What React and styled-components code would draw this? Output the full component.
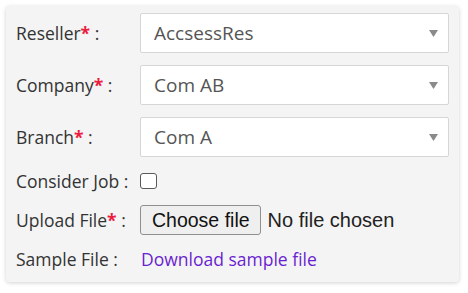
import styled, { createGlobalStyle } from "styled-components";

const Global = createGlobalStyle`
  html, body {
    margin: 0;
    background: #ffffff;
    overflow: hidden;
  }
  body {
    font-family: "Open Sans", "Noto Sans", sans-serif;
  }
`;

export default function App() {
  return (
    <>
      <Global />
      <Page>
        <Panel>
          <Row>
            <Label>
              Reseller<Star>*</Star> :
            </Label>
            <SelectBox>
              <Select defaultValue="AccsessRes">
                <option>AccsessRes</option>
              </Select>
              <Caret />
            </SelectBox>
          </Row>

          <Row>
            <Label>
              Company<Star>*</Star> :
            </Label>
            <SelectBox>
              <Select defaultValue="Com AB">
                <option>Com AB</option>
              </Select>
              <Caret />
            </SelectBox>
          </Row>

          <Row>
            <Label>
              Branch<Star>*</Star> :
            </Label>
            <SelectBox>
              <Select defaultValue="Com A">
                <option>Com A</option>
              </Select>
              <Caret />
            </SelectBox>
          </Row>

          <SmallRow>
            <Label>Consider Job :</Label>
            <Check type="checkbox" />
          </SmallRow>

          <SmallRow>
            <Label>
              Upload File<Star>*</Star> :
            </Label>
            <FilePicker>
              <HiddenFile type="file" />
              <FileButton>Choose file</FileButton>
              <FileName>No file chosen</FileName>
            </FilePicker>
          </SmallRow>

          <SmallRow>
            <Label>Sample File :</Label>
            <DownloadLink href="#">Download sample file</DownloadLink>
          </SmallRow>
        </Panel>
      </Page>
    </>
  );
}

function Caret() {
  return (
    <CaretIcon width="9" height="7" viewBox="0 0 9 7">
      <path d="M0 0 L9 0 L4.5 7 Z" fill="#8a8a8a" />
    </CaretIcon>
  );
}

const Page = styled.div`
  padding: 6px 9px 10px 6px;
`;

const Panel = styled.div`
  background: #f4f4f4;
  border-radius: 4px;
  box-shadow: 0 1px 4px rgba(0, 0, 0, 0.18);
  padding: 7px 10px 11px 10px;
  display: flex;
  flex-direction: column;
  gap: 12px;
`;

const Row = styled.div`
  display: grid;
  grid-template-columns: 124px 309px;
  align-items: center;
  height: 40px;
`;

const SmallRow = styled.div`
  display: grid;
  grid-template-columns: 124px 1fr;
  align-items: center;
  min-height: 24px;
`;

const Label = styled.label`
  font-size: 17.5px;
  color: #333333;
  white-space: nowrap;
`;

const Star = styled.span`
  color: #ec1c3f;
  font-weight: 700;
`;

const SelectBox = styled.div`
  position: relative;
  height: 40px;
`;

const Select = styled.select`
  appearance: none;
  width: 100%;
  height: 40px;
  box-sizing: border-box;
  border: 1px solid #d6d6d6;
  border-radius: 2px;
  background: #ffffff;
  padding: 0 30px 0 13px;
  font-family: "Open Sans", sans-serif;
  font-size: 19px;
  color: #555555;
  outline: none;
`;

const CaretIcon = styled.svg`
  position: absolute;
  right: 11px;
  top: 17px;
  pointer-events: none;
`;

const Check = styled.input`
  appearance: none;
  width: 17px;
  height: 16px;
  margin: 0;
  box-sizing: border-box;
  border: 1.5px solid #5a5a5a;
  border-radius: 3px;
  background: #ffffff;
`;

const FilePicker = styled.label`
  display: flex;
  align-items: center;
  gap: 7px;
  font-family: "Liberation Sans", Arial, sans-serif;
  font-size: 19.5px;
`;

const HiddenFile = styled.input`
  display: none;
`;

const FileButton = styled.span`
  display: inline-flex;
  align-items: center;
  height: 30px;
  box-sizing: border-box;
  padding: 0 10px 0 11px;
  background: #efefef;
  border: 1px solid #8f8f8f;
  border-radius: 3px;
  color: #111111;
`;

const FileName = styled.span`
  font-size: 20px;
  color: #222222;
`;

const DownloadLink = styled.a`
  font-size: 17.5px;
  color: #6a1fd0;
  text-decoration: none;
  margin-left: 1px;
`;
